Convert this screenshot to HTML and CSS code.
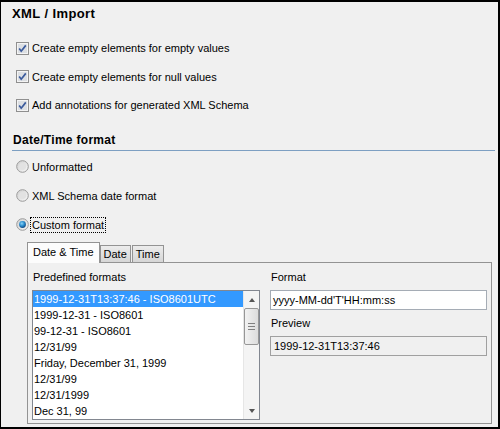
FILE: index.html
```html
<!DOCTYPE html>
<html lang="en">
<head>
    <meta charset="UTF-8">
    <title>XML / Import</title>
    <link rel="stylesheet" href="styles.css">
</head>
<body>

<div class="frame">
    <div class="title">XML / Import</div>

    <!-- Options XML -->
    <div class="options">
        <label class="check-row">
            <svg class="check-box" width="13" height="13" viewBox="0 0 13 13"><rect x="0.5" y="0.5" width="12" height="12" fill="#f4f4f4" stroke="#8f8f8f"/><rect x="2" y="2" width="9" height="9" fill="#dcdfe3"/><path d="M3.2 6.6 L5.2 9.2 L9.8 3.4" fill="none" stroke="#3a5a9c" stroke-width="1.7"/></svg>
            <span>Create empty elements for empty values</span>
        </label>
        <label class="check-row">
            <svg class="check-box" width="13" height="13" viewBox="0 0 13 13"><rect x="0.5" y="0.5" width="12" height="12" fill="#f4f4f4" stroke="#8f8f8f"/><rect x="2" y="2" width="9" height="9" fill="#dcdfe3"/><path d="M3.2 6.6 L5.2 9.2 L9.8 3.4" fill="none" stroke="#3a5a9c" stroke-width="1.7"/></svg>
            <span>Create empty elements for null values</span>
        </label>
        <label class="check-row">
            <svg class="check-box" width="13" height="13" viewBox="0 0 13 13"><rect x="0.5" y="0.5" width="12" height="12" fill="#f4f4f4" stroke="#8f8f8f"/><rect x="2" y="2" width="9" height="9" fill="#dcdfe3"/><path d="M3.2 6.6 L5.2 9.2 L9.8 3.4" fill="none" stroke="#3a5a9c" stroke-width="1.7"/></svg>
            <span>Add annotations for generated XML Schema</span>
        </label>
    </div>

    <div class="section-title">Date/Time format</div>

    <!-- Choix du format -->
    <div class="options radios">
        <label class="check-row">
            <svg class="radio" width="13" height="13" viewBox="0 0 13 13"><defs><linearGradient id="rg" x1="0" y1="0" x2="1" y2="1"><stop offset="0" stop-color="#d0d0d0"/><stop offset="1" stop-color="#f8f8f8"/></linearGradient></defs><circle cx="6.5" cy="6.5" r="5.8" fill="url(#rg)" stroke="#9a9a9a"/><circle cx="6.5" cy="6.5" r="3.6" fill="#e2e2e2"/></svg>
            <span>Unformatted</span>
        </label>
        <label class="check-row">
            <svg class="radio" width="13" height="13" viewBox="0 0 13 13"><circle cx="6.5" cy="6.5" r="5.8" fill="url(#rg)" stroke="#9a9a9a"/><circle cx="6.5" cy="6.5" r="3.6" fill="#e2e2e2"/></svg>
            <span>XML Schema date format</span>
        </label>
        <label class="check-row">
            <svg class="radio" width="13" height="13" viewBox="0 0 13 13"><defs><radialGradient id="dot" cx="0.4" cy="0.35" r="0.7"><stop offset="0" stop-color="#8fd3f5"/><stop offset="0.5" stop-color="#2a8fd0"/><stop offset="1" stop-color="#0d3f78"/></radialGradient></defs><circle cx="6.5" cy="6.5" r="5.8" fill="url(#rg)" stroke="#9a9a9a"/><circle cx="6.5" cy="6.5" r="3.4" fill="url(#dot)"/></svg>
            <span class="focused">Custom format</span>
        </label>
    </div>

    <!-- Onglets -->
    <div class="tabs">
        <div class="tab active">Date &amp; Time</div>
        <div class="tab">Date</div>
        <div class="tab">Time</div>
    </div>
    <div class="tab-panel">
        <div class="column">
            <div class="field-label">Predefined formats</div>
            <div class="list-box">
                <div class="list-items">
                    <div class="item selected">1999-12-31T13:37:46 - ISO8601UTC</div>
                    <div class="item">1999-12-31 - ISO8601</div>
                    <div class="item">99-12-31 - ISO8601</div>
                    <div class="item">12/31/99</div>
                    <div class="item">Friday, December 31, 1999</div>
                    <div class="item">12/31/99</div>
                    <div class="item">12/31/1999</div>
                    <div class="item">Dec 31, 99</div>
                </div>
                <div class="scrollbar">
                    <div class="arrow up"></div>
                    <div class="thumb"><span></span><span></span><span></span></div>
                    <div class="track"></div>
                    <div class="arrow down"></div>
                </div>
            </div>
        </div>
        <div class="column">
            <div class="field-label">Format</div>
            <div class="text-field">yyyy-MM-dd'T'HH:mm:ss</div>
            <div class="field-label second">Preview</div>
            <div class="text-field readonly">1999-12-31T13:37:46</div>
        </div>
    </div>
</div>

</body>
</html>
```

FILE: styles.css
```css
body {
    margin: 0;
    padding: 0;
    font-family: "Liberation Sans", Arial, sans-serif;
    font-size: 11px;
    color: #000;
    background-color: #fff;
}
.frame {
    width: 500px;
    height: 429px;
    box-sizing: border-box;
    border-style: solid;
    border-color: #000;
    border-width: 2px 2px 2px 1px;
    background-color: #f0f0f0; /* Fond de la fenêtre */
    overflow: hidden;
}
.title {
    margin: 4px 0 0 11px;
    font-size: 13px;
    font-weight: bold;
    line-height: 16px;
    letter-spacing: 0.4px;
}
.options {
    margin-top: 12px;
    margin-left: 15px;
}
.check-row {
    display: flex;
    align-items: center;
    height: 28.5px;
}
.check-row svg {
    flex: none;
    margin-right: 3px;
}
.radios {
    margin-top: 1px;
}
.radios .check-row {
    height: 29px;
}
.focused {
    outline: 1px dotted #000;
    outline-offset: 1px;
}
.section-title {
    margin: 0 3px 0 11px;
    padding: 13.5px 0 3px 1px;
    font-size: 12px;
    font-weight: bold;
    line-height: 14px;
    letter-spacing: 0.3px;
    border-bottom: 1px solid #7d9fc2; /* Ligne de séparation */
}
/* Onglets */
.tabs {
    display: flex;
    align-items: flex-end;
    margin-left: 26px;
    padding-top: 4px;
    height: 19px;
    position: relative;
    z-index: 1;
}
.tab {
    height: 16px;
    line-height: 17px;
    padding: 0 3px;
    border: 1px solid #939393;
    border-bottom: none;
    background: linear-gradient(#ececec, #d6d6d6);
}
.tab.active {
    height: 20px;
    line-height: 18px;
    padding: 0 5px;
    background: #fcfcfc;
    margin-bottom: -1px;
}
.tab + .tab {
    margin-left: 1px;
}
.tab.active + .tab {
    margin-left: 0;
}
.tab-panel {
    display: grid;
    grid-template-columns: 228px 217px;
    column-gap: 10px;
    margin: 0 6px 0 26px;
    padding: 7px 4px 3px 4px;
    height: 150px;
    border: 1px solid #939393;
}
.field-label {
    line-height: 14px;
    margin-bottom: 6px;
    padding-left: 1px;
}
.field-label.second {
    margin-top: 6px;
}
.list-box {
    display: flex;
    height: 128px;
    border: 1px solid #828790;
    background-color: #fff;
}
.list-items {
    flex: 1;
    overflow: hidden;
}
.item {
    height: 16px;
    line-height: 16px;
    padding-left: 1px;
    white-space: nowrap;
}
.item.selected {
    background-color: #3399ff;
    color: #fff;
}
.scrollbar {
    width: 15px;
    display: flex;
    flex-direction: column;
    background-color: #f4f4f4;
    border-left: 1px solid #e6e6e6;
}
.arrow {
    height: 17px;
    display: flex;
    align-items: center;
    justify-content: center;
}
.arrow::before {
    content: "";
    border-left: 3.5px solid transparent;
    border-right: 3.5px solid transparent;
}
.arrow.up::before {
    border-bottom: 4px solid #555;
}
.arrow.down::before {
    border-top: 4px solid #555;
}
.thumb {
    height: 37px;
    border: 1px solid #979797;
    border-radius: 2px;
    background: linear-gradient(to right, #f2f2f2, #dcdcdc);
    display: flex;
    flex-direction: column;
    align-items: center;
    justify-content: center;
    gap: 2px;
    box-sizing: border-box;
}
.thumb span {
    width: 7px;
    height: 1px;
    background-color: #808080;
}
.track {
    flex: 1;
}
.text-field {
    height: 18px;
    line-height: 18px;
    padding-left: 2px;
    border: 1px solid #a5acb5;
    background-color: #fff;
    white-space: nowrap;
}
.text-field.readonly {
    background-color: #f0f0f0;
    border-color: #a0a0a0;
    padding-left: 3px;
}
```
